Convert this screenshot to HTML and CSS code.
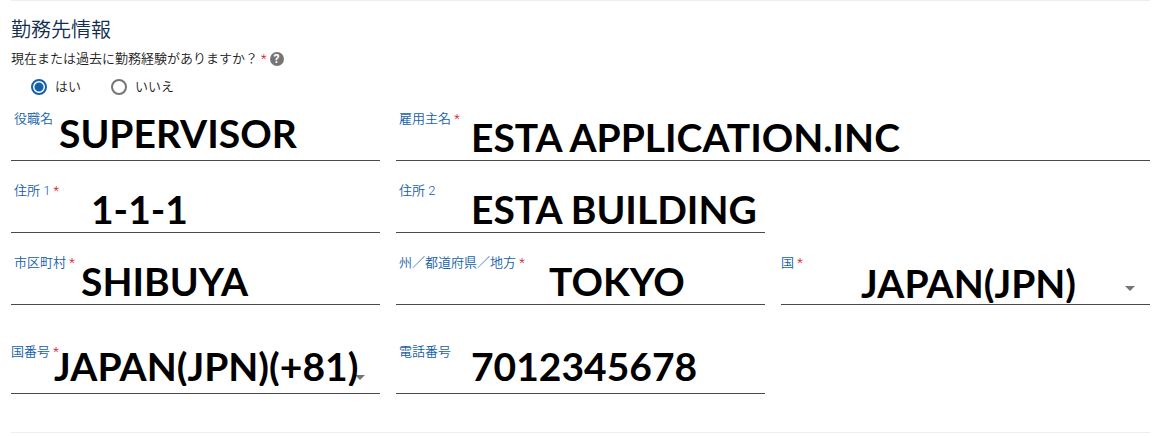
FILE: index.html
```html
<!DOCTYPE html>
<html lang="ja">
  <head>
    <meta charset="UTF-8" />
    <meta name="viewport" content="width=device-width, initial-scale=1.0" />
    <title>勤務先情報</title>
    <link rel="stylesheet" href="styles.css">
  </head>
  <body>
    <form class="employment">
      <h2>勤務先情報</h2>

      <fieldset class="question">
        <legend>
          現在または過去に勤務経験がありますか？ <span class="required">*</span>
          <button type="button" class="help">?</button>
        </legend>
        <div class="options">
          <label class="option"><input type="radio" name="employed" checked />はい</label>
          <label class="option"><input type="radio" name="employed" />いいえ</label>
        </div>
      </fieldset>

      <div class="fields">
        <div class="field high">
          <label for="jobTitle">役職名</label>
          <input type="text" id="jobTitle" class="indent-sm" value="SUPERVISOR" />
        </div>
        <div class="field wide">
          <label for="employer">雇用主名 <span class="required">*</span></label>
          <input type="text" id="employer" class="indent-lg" value="ESTA APPLICATION.INC" />
        </div>

        <div class="field new-row">
          <label for="address1">住所 1 <span class="required">*</span></label>
          <input type="text" id="address1" class="indent-xl" value="1-1-1" />
        </div>
        <div class="field">
          <label for="address2">住所 2</label>
          <input type="text" id="address2" class="indent-lg" value="ESTA BUILDING" />
        </div>

        <div class="field new-row">
          <label for="city">市区町村 <span class="required">*</span></label>
          <input type="text" id="city" class="indent-md" value="SHIBUYA" />
        </div>
        <div class="field">
          <label for="state">州／都道府県／地方 <span class="required">*</span></label>
          <input type="text" id="state" class="indent-xxl" value="TOKYO" />
        </div>
        <div class="field select">
          <label for="country">国 <span class="required">*</span></label>
          <select id="country" class="indent-xl">
            <option>JAPAN(JPN)</option>
          </select>
        </div>
      </div>

      <div class="fields phone">
        <div class="field select high">
          <label for="countryCode">国番号 <span class="required">*</span></label>
          <select id="countryCode" class="indent-xs">
            <option>JAPAN(JPN)(+81)</option>
          </select>
        </div>
        <div class="field high">
          <label for="phone">電話番号</label>
          <input type="tel" id="phone" class="indent-lg" value="7012345678" />
        </div>
      </div>
    </form>
  </body>
</html>
```
FILE: styles.css
```css
* {
  box-sizing: border-box;
}

body {
  margin: 0;
  background-color: #fff;
  color: #212121;
  font-family: Roboto, "Noto Sans CJK JP", sans-serif;
  font-size: 13px;
  font-weight: 350;
  line-height: 20px;
}

.employment {
  margin: 0 5px 0 11px;
  padding: 17px 0 38px;
  border-top: 1px solid #eee;
  border-bottom: 1px solid #eee;
}

h2 {
  margin: 0 0 7px;
  color: #112e51;
  font-size: 20px;
  font-weight: 350;
  line-height: 24px;
}

.required {
  color: #d0021b;
}

/* Question */
.question {
  margin: 0;
  padding: 0;
  border: none;
}

.question legend {
  display: flex;
  align-items: center;
  gap: 3px;
  padding: 0;
}

.help {
  width: 14px;
  height: 14px;
  padding: 0;
  border: none;
  border-radius: 50%;
  background-color: #757575;
  color: #fff;
  font: bold 12px/14px Roboto, sans-serif;
}

.options {
  display: flex;
  gap: 30px;
  margin: 8px 0 0 20px;
}

.option {
  display: flex;
  align-items: center;
  gap: 8px;
}

.option input {
  appearance: none;
  width: 16px;
  height: 16px;
  margin: 0;
  border: 2px solid #757575;
  border-radius: 50%;
}

.option input:checked {
  border-color: #1460aa;
  background: radial-gradient(circle, #1460aa 4px, transparent 5px);
}

/* Form fields */
.fields {
  display: grid;
  grid-template-columns: repeat(3, 1fr);
  gap: 21px 16px;
  margin-top: 13px;
}

.phone {
  margin-top: 38px;
}

.wide {
  grid-column: span 2;
}

.new-row {
  grid-column-start: 1;
}

/* The label and the value share one cell */
.field {
  display: grid;
  grid-template-columns: minmax(0, 1fr);
  height: 51px;
  border-bottom: 1px solid #4a4a4a;
}

.field > *,
.select::before {
  grid-area: 1 / 1;
}

.field label {
  justify-self: start;
  align-self: start;
  padding-left: 3px;
  color: #1460aa;
  line-height: 18px;
}

.field.select label {
  padding-left: 0;
}

.field input,
.field select {
  appearance: none;
  align-self: end;
  width: 100%;
  height: 43px;
  padding: 0 0 3px;
  border: none;
  outline: none;
  background: transparent;
  color: #000;
  font: bold 39px/40px Lato, sans-serif;
}

.field select {
  padding-bottom: 0;
}

.field.high input,
.field.high select {
  height: 47px;
  padding-bottom: 7px;
}

.field .indent-xs {
  padding-left: 43px;
}

.field .indent-sm {
  padding-left: 48px;
}

.field .indent-md {
  padding-left: 70px;
}

.field .indent-lg {
  padding-left: 75px;
}

.field .indent-xl {
  padding-left: 80px;
}

.field .indent-xxl {
  padding-left: 153px;
}

.select::before {
  content: "";
  justify-self: end;
  align-self: end;
  margin: 0 15px 13px 0;
  border: 5px solid transparent;
  border-top-color: #757575;
  border-bottom: none;
}
```
